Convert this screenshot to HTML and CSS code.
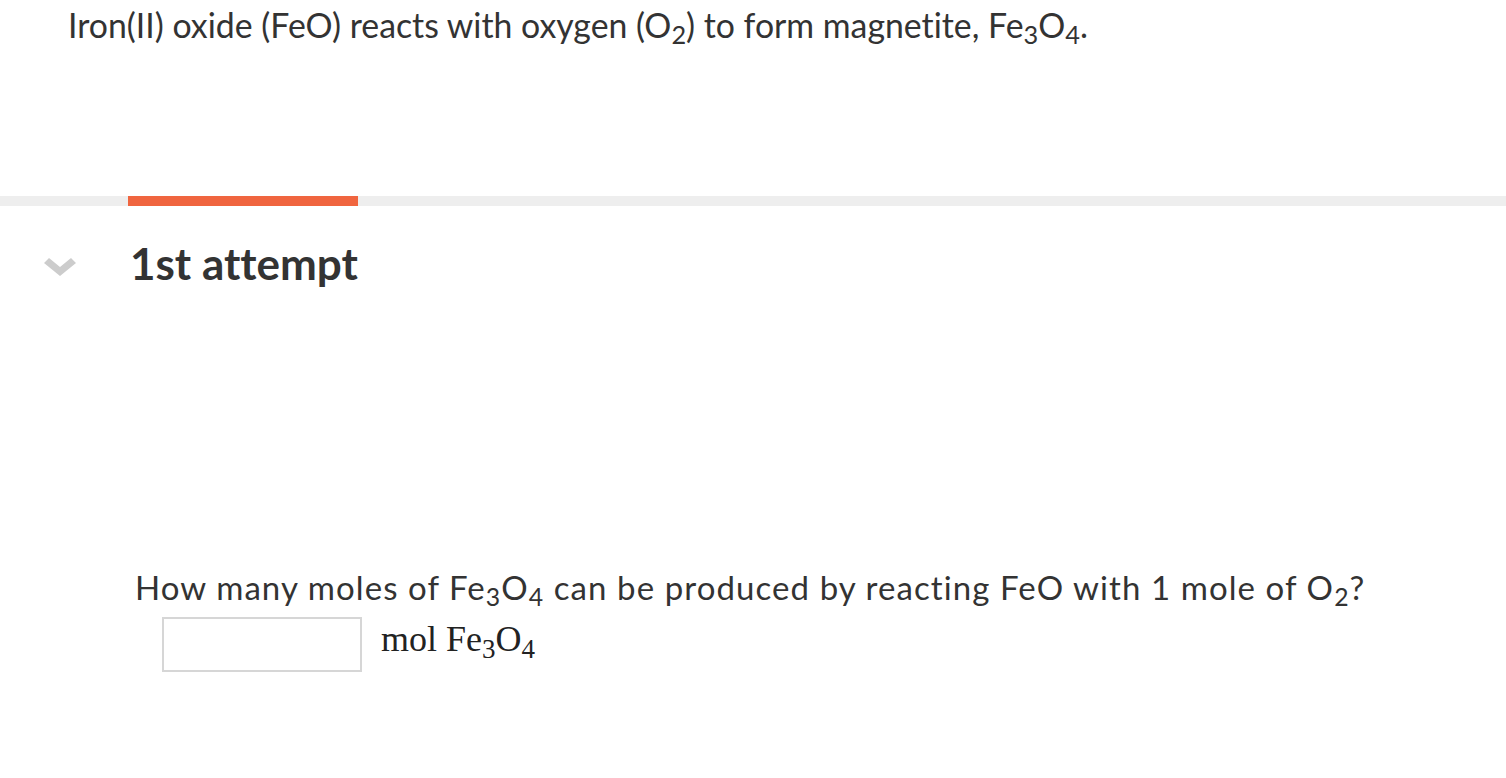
FILE: index.html
```html
<!DOCTYPE html>
<html>
<head>
<meta charset="utf-8">
<link rel="stylesheet" href="styles.css">
</head>
<body>
<div class="page">
  <p class="intro">Iron(II) oxide (FeO) reacts with oxygen (O<sub>2</sub>) to form magnetite, Fe<sub>3</sub>O<sub>4</sub>.</p>
  <div class="progress"><div class="progress-fill"></div></div>
  <div class="attempt-head">
    <svg class="chev" width="32" height="18" viewBox="0 0 32 18"><polygon points="0,5 5,0 16,9 27,0 32,5 16,18" fill="#cccccc"/></svg>
    <h2 class="attempt-title">1st attempt</h2>
  </div>
  <div class="question">
    <p class="q-text">How many moles of Fe<sub>3</sub>O<sub>4</sub> can be produced by reacting FeO with 1 mole of O<sub>2</sub>?</p>
    <div class="answer-row">
      <input class="answer" type="text">
      <span class="unit">mol Fe<sub>3</sub>O<sub>4</sub></span>
    </div>
  </div>
</div>
</body>
</html>
```
FILE: styles.css
```css
html, body { margin: 0; padding: 0; background: #fff; }
body { font-family: Lato, "Liberation Sans", sans-serif; color: #333; font-variant-ligatures: none; }
.page { width: 1506px; height: 778px; overflow: hidden; }
sub { font-size: 0.75em; vertical-align: -0.25em; line-height: 0; }
.intro { margin: 0; padding: 5px 0 0 68px; font-size: 33.8px; line-height: 40px; }
.progress { margin-top: 151px; height: 10px; background: #eeeeee; }
.progress-fill { margin-left: 128px; width: 230px; height: 10px; background: #f0653f; }
.attempt-head { display: flex; align-items: flex-start; margin-top: 31px; }
.chev { margin-left: 44px; margin-right: 54px; margin-top: 21px; }
.attempt-title { margin: 0; font-size: 44px; font-weight: 700; line-height: 53px; color: #333; }
.question { padding: 277px 0 0 135px; }
.q-text { margin: 0; font-size: 33px; line-height: 40px; letter-spacing: 1.08px; }
.answer-row { display: flex; align-items: flex-start; margin-left: 27px; margin-top: 10px; }
.answer { width: 200px; height: 55px; box-sizing: border-box; border: 2px solid #d6d6d6; margin: 0; padding: 0; }
.unit { font-family: "Liberation Serif", serif; font-size: 36px; line-height: 40px; color: #222; margin-left: 19px; margin-top: 2px; }
```
